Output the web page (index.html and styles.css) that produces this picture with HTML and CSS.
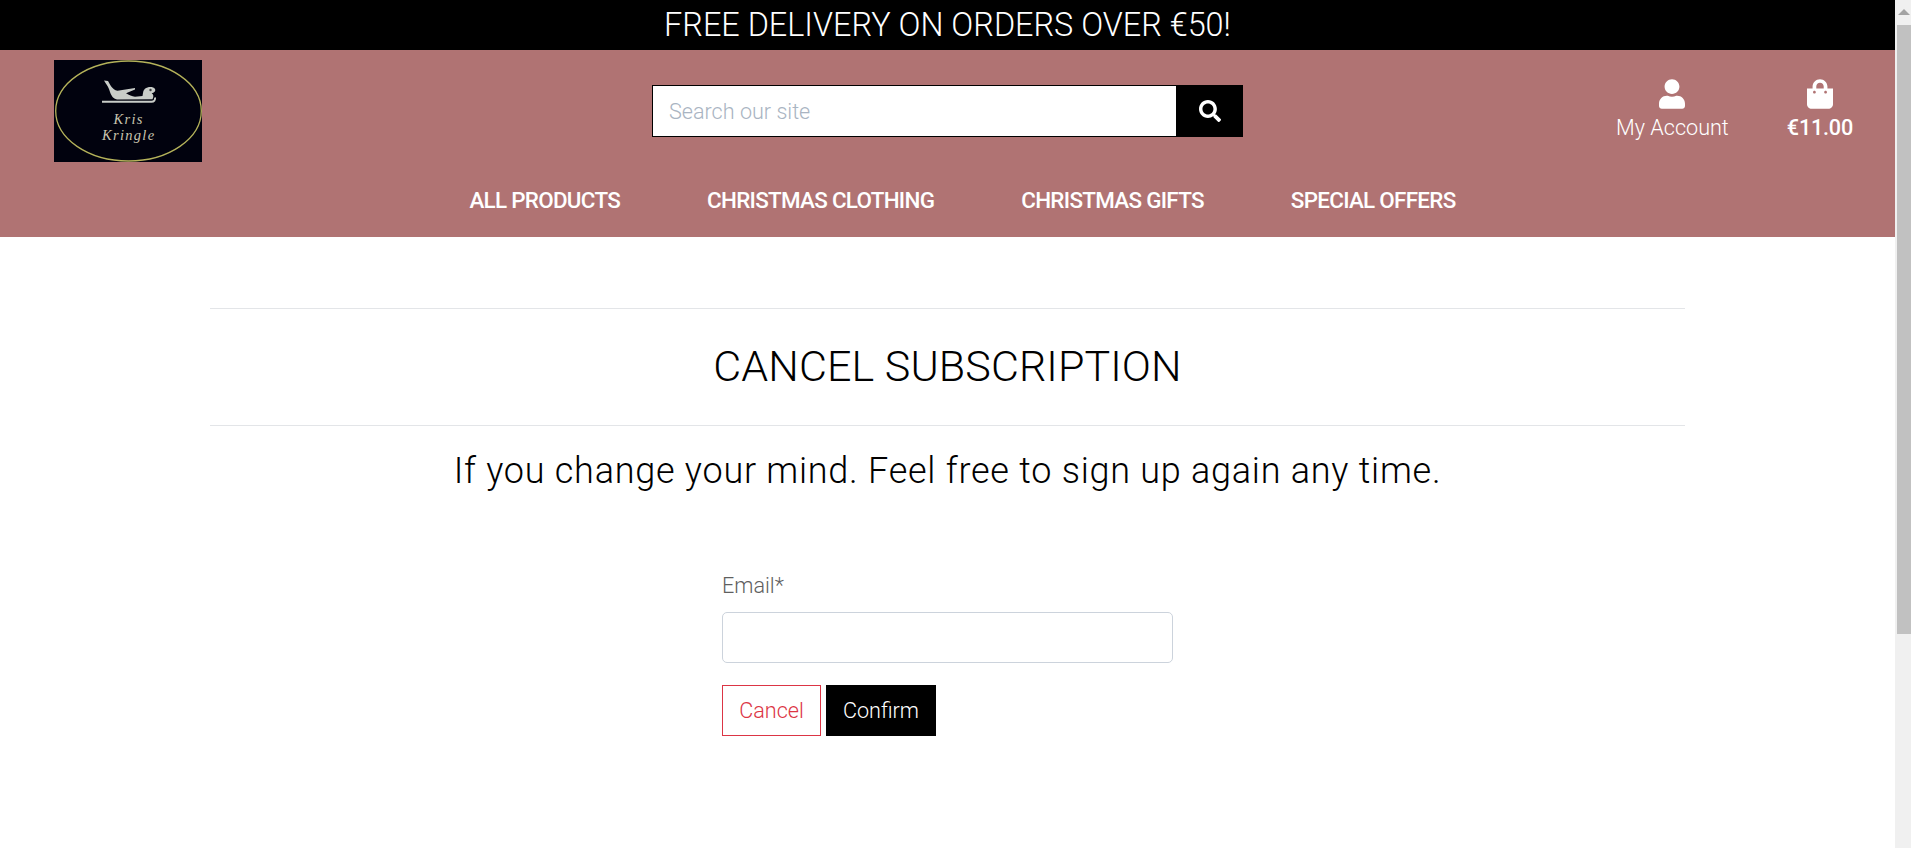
FILE: index.html
```html
<!DOCTYPE html>
<html lang="en">
<head>
<meta charset="utf-8">
<title>Cancel Subscription</title>
<link rel="stylesheet" href="styles.css">
</head>
<body>
<div class="page">
  <div class="banner">FREE DELIVERY ON ORDERS OVER €50!</div>
  <header class="header">
    <div class="header-top">
      <a class="logo" href="#">
        <svg class="logo-svg" viewBox="0 0 148 102">
          <rect width="148" height="102" fill="#01020e"/>
          <ellipse cx="74.5" cy="51" rx="72.8" ry="50" fill="none" stroke="#b4b25a" stroke-width="1.3"/>
          <path class="sleigh" d="M50 20.5 L54 21 C56 24 58 30 63.5 30.7 L81 28 L81 29.5 L72 33.3 C75 35 78 36.5 81 36.7 L88.5 36 C89 34 89 31 90 30 C91 28 93 27.5 95 27 C97 26.7 100 27 101 29 C102 31 100 33 97.7 33.3 C99.5 34.5 100 36.5 98.5 39.3 L63 39.5 C59 38.5 57.5 36 56 32 C55 28 53 25 51.5 23 Z"/>
          <path class="runner" d="M48 41.7 H97.5 C100 41.7 101.5 40 101 37.5"/>
          <circle class="sleigh-hole" cx="96.5" cy="30" r="1.2"/>
          <text class="logo-text" x="74.7" y="64">Kris</text>
          <text class="logo-text" x="74.7" y="79.5">Kringle</text>
        </svg>
      </a>
      <form class="search">
        <input class="search-input" type="text" placeholder="Search our site">
        <button class="search-btn" type="button" aria-label="Search">
          <svg class="search-icon" viewBox="0 0 512 512"><path d="M505 442.7L405.3 343c-4.5-4.5-10.6-7-17-7H372c27.6-35.3 44-79.7 44-128C416 93.1 322.9 0 208 0S0 93.1 0 208s93.1 208 208 208c48.3 0 92.7-16.4 128-44v16.3c0 6.4 2.5 12.5 7 17l99.7 99.7c9.4 9.4 24.6 9.4 33.9 0l28.3-28.3c9.4-9.4 9.4-24.6.1-34zM208 336c-70.7 0-128-57.2-128-128 0-70.7 57.2-128 128-128 70.7 0 128 57.2 128 128 0 70.7-57.2 128-128 128z"/></svg>
        </button>
      </form>
      <div class="actions">
        <a class="action" href="#">
          <svg class="action-icon" viewBox="0 0 448 512"><path d="M224 256c70.7 0 128-57.3 128-128S294.7 0 224 0 96 57.3 96 128s57.3 128 128 128zm89.6 32h-16.7c-22.2 10.2-46.9 16-72.9 16s-50.6-5.8-72.9-16h-16.7C60.2 288 0 348.2 0 422.4V464c0 26.5 21.5 48 48 48h352c26.5 0 48-21.5 48-48v-41.6c0-74.2-60.2-134.4-134.4-134.4z"/></svg>
          <span>My Account</span>
        </a>
        <a class="action action-total" href="#">
          <svg class="action-icon" viewBox="0 0 448 512"><path d="M352 160v-32C352 57.42 294.579 0 224 0 153.42 0 96 57.42 96 128v32H0v272c0 44.183 35.817 80 80 80h288c44.183 0 80-35.817 80-80V160h-96zm-192-32c0-35.29 28.71-64 64-64s64 28.71 64 64v32H160v-32zm160 120c-13.255 0-24-10.745-24-24s10.745-24 24-24 24 10.745 24 24-10.745 24-24 24zm-192 0c-13.255 0-24-10.745-24-24s10.745-24 24-24 24 10.745 24 24-10.745 24-24 24z"/></svg>
          <span>€11.00</span>
        </a>
      </div>
    </div>
    <nav class="nav">
      <a href="#">ALL PRODUCTS</a>
      <a href="#">CHRISTMAS CLOTHING</a>
      <a href="#">CHRISTMAS GIFTS</a>
      <a href="#">SPECIAL OFFERS</a>
    </nav>
  </header>
  <main class="main">
    <div class="title-block">
      <h1 class="title">CANCEL SUBSCRIPTION</h1>
    </div>
    <p class="subtitle">If you change your mind. Feel free to sign up again any time.</p>
    <form class="form">
      <label class="label" for="email">Email*</label>
      <input class="field" id="email" type="email">
      <div class="buttons">
        <a class="btn btn-cancel" href="#">Cancel</a>
        <button class="btn btn-confirm" type="button">Confirm</button>
      </div>
    </form>
  </main>
</div>
<div class="scrollbar" aria-hidden="true">
  <div class="scroll-arrow"></div>
  <div class="scroll-thumb"></div>
</div>
</body>
</html>
```
FILE: styles.css
```css
* { box-sizing: border-box; }
html, body { height: 100%; }
body {
  margin: 0;
  display: flex;
  height: 848px;
  overflow: hidden;
  background: #fff;
  color: #000;
  font-family: Roboto, "Liberation Sans", sans-serif;
  font-weight: 300;
}
a { color: inherit; text-decoration: none; }

.page { flex: 1; min-width: 0; }

.banner {
  height: 50px;
  background: #000;
  color: #fff;
  font-size: 32.4px;
  line-height: 50px;
  text-align: center;
}

.header {
  height: 187px;
  background: #b07373;
  color: #fff;
}
.header-top {
  display: grid;
  grid-template-columns: 1fr 591px 1fr;
  height: 127px;
  padding-top: 10px;
}
.logo { display: block; width: 148px; height: 102px; margin-left: 54px; }
.logo-svg { display: block; width: 148px; height: 102px; }
.sleigh { fill: #c9cdc8; }
.sleigh-hole { fill: #3a3c3f; }
.runner { fill: none; stroke: #c9cdc8; stroke-width: 2; }
.logo-text {
  fill: #c9c4ae;
  font-family: "Liberation Serif", serif;
  font-style: italic;
  font-size: 14.5px;
  letter-spacing: 1.3px;
  text-anchor: middle;
}

.search { display: flex; height: 52px; margin-top: 25px; }
.search-input {
  flex: 1;
  min-width: 0;
  height: 52px;
  border: 1px solid #000;
  border-right: 0;
  border-radius: 0;
  padding: 0 16px;
  font: 300 21.6px Roboto, sans-serif;
  background: #fff;
  outline: 0;
}
.search-input::placeholder { color: #a9b4c2; opacity: 1; }
.search-btn {
  display: flex;
  flex: none;
  align-items: center;
  justify-content: center;
  width: 67px;
  height: 52px;
  padding: 0;
  border: 0;
  background: #000;
}
.search-icon { width: 22px; height: 22px; fill: #fff; }

.actions {
  display: flex;
  justify-content: flex-end;
  gap: 58px;
  padding: 19px 42px 0 0;
}
.action {
  display: flex;
  flex-direction: column;
  align-items: center;
  font-size: 21.6px;
  line-height: 30px;
}
.action-icon { width: 26px; height: 30px; fill: #fff; margin-bottom: 4px; }
.action-total { font-weight: 500; letter-spacing: -0.2px; }

.nav {
  display: flex;
  justify-content: center;
  gap: 87px;
  padding: 10px 0 0 30px;
  font-size: 22.4px;
  font-weight: 500;
  letter-spacing: -0.7px;
  line-height: 26px;
}

.main { padding-top: 71px; }
.title-block {
  width: 1475px;
  margin: 0 auto;
  height: 118px;
  border-top: 1px solid #e3e5e8;
  border-bottom: 1px solid #e3e5e8;
  display: flex;
  align-items: center;
  justify-content: center;
}
.title {
  margin: -2px 0 0;
  font-size: 43px;
  font-weight: 300;
  letter-spacing: 0.1px;
}
.subtitle {
  margin: 23px 0 0;
  font-size: 36px;
  line-height: 44px;
  letter-spacing: 0.75px;
  text-align: center;
}
.form { width: 451px; margin: 78px auto 0; }
.label {
  display: block;
  font-size: 21.6px;
  line-height: 30px;
  color: #5f5f5f;
}
.field {
  display: block;
  width: 100%;
  height: 51px;
  margin-top: 11px;
  border: 1px solid #ccd3dc;
  border-radius: 5px;
  background: #fff;
  outline: 0;
}
.buttons { display: flex; gap: 5px; margin-top: 22px; }
.btn {
  display: flex;
  align-items: center;
  justify-content: center;
  height: 51px;
  font: 300 21.6px Roboto, sans-serif;
  border-radius: 0;
}
.btn-cancel { width: 99px; border: 1px solid #dc3545; color: #dc3545; }
.btn-confirm { width: 110px; border: 0; background: #000; color: #fff; }

.scrollbar {
  flex: none;
  width: 16px;
  height: 848px;
  padding-left: 2px;
  background: #f0f0f0;
}
.scroll-arrow {
  width: 0;
  height: 0;
  margin: 9px 0 0 1px;
  border-left: 6px solid transparent;
  border-right: 6px solid transparent;
  border-bottom: 6px solid #a3a3a3;
}
.scroll-thumb {
  height: 609px;
  margin-top: 10px;
  background: #c1c1c1;
}
```
